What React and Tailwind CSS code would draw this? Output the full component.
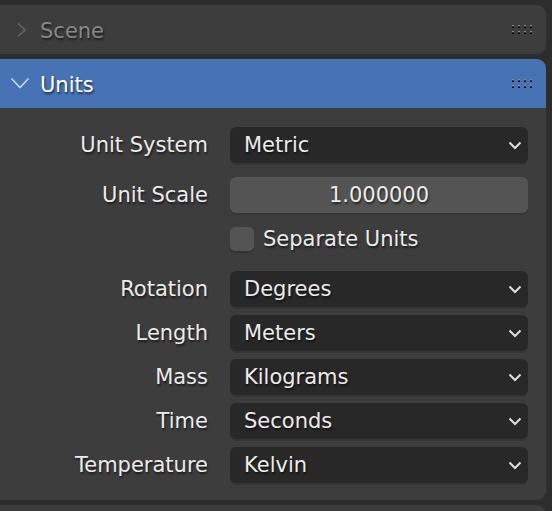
import React from 'react';

const font = { fontFamily: '"DejaVu Sans", "Liberation Sans", sans-serif' };

const Grip = () => (
  <svg width="20" height="10" viewBox="0 0 20 10" className="block">
    {[0, 6, 12, 18].map((x) =>
      [0, 6].map((y) => (
        <g key={`${x}-${y}`}>
          <rect x={x} y={y} width="2" height="1.5" fill="#8a8a8a" />
          <rect x={x} y={y + 1.5} width="2" height="1.5" fill="#000" />
        </g>
      ))
    )}
  </svg>
);

const Chevron = () => (
  <svg width="14" height="9" viewBox="0 0 14 9" className="block">
    <path d="M1.5 1.5 L7 7 L12.5 1.5" fill="none" stroke="#e0e0e0" strokeWidth="2" />
  </svg>
);

const Row = ({ label, children, className = '' }) => (
  <div className={`flex items-center ${className}`}>
    <div className="w-[209px] text-right pr-px">{label}</div>
    <div className="ml-[21px] w-[298px]">{children}</div>
  </div>
);

const Dropdown = ({ value }) => (
  <div className="h-[36px] rounded-[6px] bg-[#282828] shadow-[0_2px_0_#353535] flex items-center pl-[14px] pr-[6px]">
    <span className="flex-1">{value}</span>
    <Chevron />
  </div>
);

const dropRows = [
  ['Length', 'Meters'],
  ['Mass', 'Kilograms'],
  ['Time', 'Seconds'],
  ['Temperature', 'Kelvin'],
];

export default function App() {
  return (
    <div
      className="w-[552px] h-[511px] bg-[#2d2d2d] overflow-hidden pt-[5px] text-[21px] leading-[36px] text-[#ebebeb] [text-shadow:1px_2px_2px_rgba(0,0,0,0.55)]"
      style={font}
    >
      {/* Scene (collapsed) */}
      <div className="w-[546px] h-[49px] bg-[#3d3d3d] rounded-r-[9px] flex items-center">
        <svg width="12" height="16" viewBox="0 0 12 16" className="ml-[16px] block">
          <path d="M2 1.5 L9 8 L2 14.5" fill="none" stroke="#666" strokeWidth="1.6" />
        </svg>
        <span className="ml-[12px] pt-[2px] text-[#878787]">Scene</span>
        <div className="ml-auto mr-[14px]"><Grip /></div>
      </div>

      {/* Units */}
      <div className="mt-[5px] w-[546px] bg-[#3d3d3d] rounded-r-[9px] overflow-hidden">
        <div className="h-[49px] bg-[#4772b3] flex items-center">
          <svg width="20" height="13" viewBox="0 0 20 13" className="ml-[10px] block">
            <path d="M1.5 1.5 L10 10.5 L18.5 1.5" fill="none" stroke="#c9d5ea" strokeWidth="1.6" />
          </svg>
          <span className="ml-[10px] pt-[2px] text-white">Units</span>
          <div className="ml-auto mr-[14px]"><Grip /></div>
        </div>

        <div className="pt-[19px] pb-[17px]">
          <Row label="Unit System">
            <Dropdown value="Metric" />
          </Row>
          <Row label="Unit Scale" className="mt-[14px]">
            <div className="h-[36px] rounded-[6px] bg-[#545454] shadow-[0_2px_0_#353535] flex items-center justify-center">
              1.000000
            </div>
          </Row>
          <Row label="" className="mt-[8px]">
            <div className="flex items-center h-[36px]">
              <div className="w-[24px] h-[24px] rounded-[5px] bg-[#545454] shadow-[0_2px_0_#333]" />
              <span className="ml-[9px]">Separate Units</span>
            </div>
          </Row>
          <Row label="Rotation" className="mt-[14px]">
            <Dropdown value="Degrees" />
          </Row>
          {dropRows.map(([l, v]) => (
            <Row key={l} label={l} className="mt-[8px]">
              <Dropdown value={v} />
            </Row>
          ))}
        </div>
      </div>

      <div className="mt-[5px] w-[546px] h-[40px] bg-[#3d3d3d] rounded-tr-[9px]" />
    </div>
  );
}
